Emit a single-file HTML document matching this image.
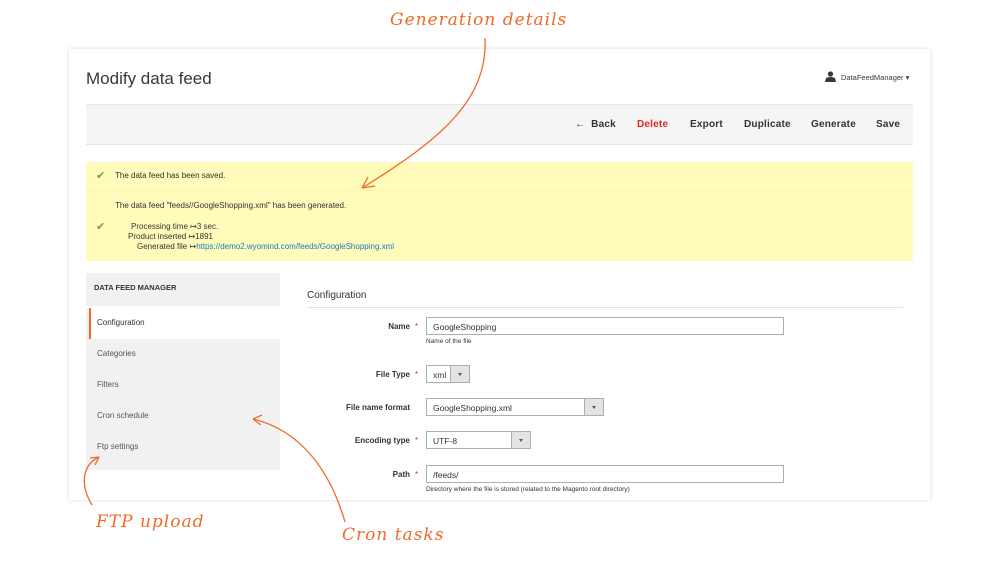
<!DOCTYPE html>
<html><head><meta charset="utf-8"><style>
*{margin:0;padding:0;box-sizing:border-box}
body{width:1000px;height:574px;background:#fff;font-family:"Liberation Sans","DejaVu Sans",sans-serif;position:relative;overflow:hidden;color:#333}
.a{position:absolute}
.card{left:69px;top:49px;width:861px;height:451px;background:#fff;box-shadow:0 0 4px rgba(0,0,0,.15)}
.t{font-size:8px;color:#333;white-space:nowrap}
.btn{top:119px;font-size:10px;color:#333;font-weight:bold;letter-spacing:.2px}
.hand{font-family:"DejaVu Serif",serif;font-style:italic;color:#ef6a2a;font-size:17px;letter-spacing:1px}
.lbl{font-size:8px;font-weight:bold;color:#333;text-align:right;width:200px;left:210px}
.star{color:#e22626;font-size:8px;left:415px}
.inp{border:1px solid #adadad;background:#fff;font-size:8.5px;color:#333;padding:4px 6px;height:18px;left:426px}
.arr{position:absolute;right:0;top:0;bottom:0;width:19px;background:#e3e3e3;border-left:1px solid #adadad}
.arr:after{content:"";position:absolute;left:7px;top:7px;border:2.5px solid transparent;border-top:3px solid #555}
.side{font-size:8px;color:#555;left:97px}
</style></head><body>
<div class="a card"></div>
<div class="a" style="left:86px;top:69px;font-size:17px;color:#41362f">Modify data feed</div>
<svg class="a" style="left:825px;top:71px" width="11" height="11" viewBox="0 0 11 11"><circle cx="5.5" cy="3" r="2.6" fill="#41362f"/><path d="M0 11 L1 7 Q5.5 5 10 7 L11 11Z" fill="#41362f"/></svg>
<div class="a t" style="left:841px;top:73px;font-size:7.5px;color:#41362f">DataFeedManager ▾</div>
<div class="a" style="left:86px;top:104px;width:827px;height:41px;background:#f5f5f5;border-top:1px solid #e6e6e6;border-bottom:1px solid #e6e6e6"></div>
<div class="a btn" style="left:575px">←&nbsp;&nbsp;Back</div>
<div class="a btn" style="left:637px;color:#e22626">Delete</div>
<div class="a btn" style="left:690px">Export</div>
<div class="a btn" style="left:744px">Duplicate</div>
<div class="a btn" style="left:811px">Generate</div>
<div class="a btn" style="left:876px">Save</div>
<div class="a" style="left:86px;top:162px;width:827px;height:99px;background:#fffbbb"></div>
<div class="a" style="left:86px;top:190px;width:827px;height:1px;background:#fdf6a8"></div>
<div class="a" style="left:96px;top:169px;color:#79a22e;font-size:11px;font-weight:bold">✔</div>
<div class="a" style="left:96px;top:220px;color:#79a22e;font-size:11px;font-weight:bold">✔</div>
<div class="a t" style="left:115px;top:171px">The data feed has been saved.</div>
<div class="a t" style="left:115px;top:201px">The data feed "feeds//GoogleShopping.xml" has been generated.</div>
<div class="a t" style="left:131px;top:222px">Processing time ↦3 sec.</div>
<div class="a t" style="left:128px;top:232px">Product inserted ↦1891</div>
<div class="a t" style="left:137px;top:242px">Generated file ↦<span style="color:#1979c3">https://demo2.wyomind.com/feeds/GoogleShopping.xml</span></div>
<div class="a" style="left:86px;top:273px;width:194px;height:197px;background:#f1f1f1"></div>
<div class="a" style="left:86px;top:306px;width:194px;height:2px;background:#fff"></div>
<div class="a t" style="left:94px;top:283px;font-weight:bold;font-size:7.5px">DATA FEED MANAGER</div>
<div class="a" style="left:89px;top:308px;width:191px;height:31px;background:#fff;border-left:2px solid #ef6a2a"></div>
<div class="a side" style="top:318px;color:#333">Configuration</div>
<div class="a side" style="top:349px">Categories</div>
<div class="a side" style="top:380px">Filters</div>
<div class="a side" style="top:411px">Cron schedule</div>
<div class="a side" style="top:442px">Ftp settings</div>
<div class="a" style="left:307px;top:290px;font-size:10px;color:#333">Configuration</div>
<div class="a" style="left:307px;top:307px;width:596px;height:1px;background:#e3e3e3"></div>
<div class="a lbl" style="top:322px">Name</div><div class="a star" style="top:322px">*</div>
<div class="a inp" style="top:317px;width:358px">GoogleShopping</div>
<div class="a t" style="left:426px;top:338px;font-size:6.5px">Name of the file</div>
<div class="a lbl" style="top:370px">File Type</div><div class="a star" style="top:370px">*</div>
<div class="a inp" style="top:365px;width:44px">xml<span class="arr"></span></div>
<div class="a lbl" style="top:403px">File name format</div>
<div class="a inp" style="top:398px;width:178px">GoogleShopping.xml<span class="arr"></span></div>
<div class="a lbl" style="top:436px">Encoding type</div><div class="a star" style="top:436px">*</div>
<div class="a inp" style="top:431px;width:105px">UTF-8<span class="arr"></span></div>
<div class="a lbl" style="top:470px">Path</div><div class="a star" style="top:470px">*</div>
<div class="a inp" style="top:465px;width:358px">/feeds/</div>
<div class="a t" style="left:426px;top:486px;font-size:6.5px">Directory where the file is stored (related to the Magento root directory)</div>
<div class="a hand" style="left:390px;top:10px">Generation details</div>
<div class="a hand" style="left:96px;top:512px">FTP upload</div>
<div class="a hand" style="left:342px;top:525px">Cron tasks</div>
<svg class="a" style="left:0;top:0" width="1000" height="574" fill="none" stroke="#ef6a2a" stroke-width="1.3">
<path d="M485 38 C488 100 440 140 362 188"/><path d="M362 188 L375 186 M362 188 L368 177"/>
<path d="M345 522 C330 470 300 430 253 419"/><path d="M253 419 L262 415 M253 419 L261 425"/>
<path d="M92 505 C80 485 82 465 99 457"/><path d="M99 457 L90 458 M99 457 L95 465"/>
</svg>
</body></html>
